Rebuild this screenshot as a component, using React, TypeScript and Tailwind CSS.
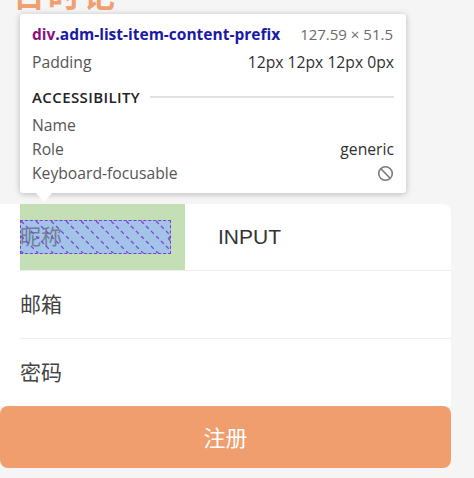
import React from "react";

const sans = { fontFamily: '"Open Sans", "Noto Sans", "Noto Sans CJK SC", sans-serif' };

function NoIcon() {
  return (
    <svg width="17" height="17" viewBox="0 0 17 17" fill="none">
      <circle cx="8.5" cy="8.5" r="6.8" stroke="#7a7a7a" strokeWidth="1.6" />
      <line x1="3.8" y1="3.8" x2="13.2" y2="13.2" stroke="#7a7a7a" strokeWidth="1.6" />
    </svg>
  );
}

function Hatch() {
  return (
    <svg className="absolute inset-0 w-full h-full" preserveAspectRatio="none">
      <defs>
        <pattern id="hatch" width="15" height="15" patternUnits="userSpaceOnUse">
          <line x1="0" y1="0" x2="15" y2="15" stroke="#7a45cf" strokeWidth="1.3" strokeDasharray="4 3" />
        </pattern>
      </defs>
      <rect width="100%" height="100%" fill="url(#hatch)" />
    </svg>
  );
}

function Tooltip() {
  return (
    <div
      className="absolute left-[20px] top-[14px] w-[386px] h-[179px] bg-white rounded-[3px] shadow-[0_1px_6px_rgba(0,0,0,0.25)] px-[12px] pt-[7px] text-[15.7px] leading-[24px]"
      style={{ fontFamily: '"Open Sans", "Noto Sans", sans-serif' }}
    >
      <div className="flex justify-between items-center h-[26px]">
        <span className="font-bold text-[15.5px]">
          <span className="text-[#881280]">div</span>
          <span className="text-[#1a1aa6]">.adm-list-item-content-prefix</span>
        </span>
        <span className="text-[#6b6b6b] text-[15px] pr-[1px]">127.59 × 51.5</span>
      </div>
      <div className="flex justify-between items-center h-[28px] mt-[1px]">
        <span className="text-[#555]">Padding</span>
        <span className="text-[#303030]">12px 12px 12px 0px</span>
      </div>
      <div className="flex items-center gap-[10px] h-[24px] mt-[9px]">
        <span className="text-[15px] font-semibold tracking-[0.4px] text-[#222]">ACCESSIBILITY</span>
        <div className="flex-1 h-[2px] bg-[#e2e2e2]" />
      </div>
      <div className="flex justify-between items-center h-[24px] mt-[4px]">
        <span className="text-[#555]">Name</span>
      </div>
      <div className="flex justify-between items-center h-[24px]">
        <span className="text-[#555]">Role</span>
        <span className="text-[#303030]">generic</span>
      </div>
      <div className="flex justify-between items-center h-[24px]">
        <span className="text-[#555]">Keyboard-focusable</span>
        <NoIcon />
      </div>
      <div className="absolute left-[16px] -bottom-[9px] w-0 h-0 border-l-[8px] border-r-[8px] border-t-[9px] border-l-transparent border-r-transparent border-t-white" />
    </div>
  );
}

export default function App() {
  return (
    <div className="relative w-[474px] h-[478px] overflow-hidden bg-[#f5f5f5]">
      <div className="h-[204px] flex flex-col">
        <div
          className="ml-[13px] -mt-[27px] text-[32px] leading-[40px] font-bold text-[#f0a070] tracking-[3px]"
          style={{ fontFamily: '"Noto Sans CJK SC", sans-serif' }}
        >
          日时记
        </div>
      </div>
      <div className="w-[451px] bg-white rounded-tr-[8px]">
        <div className="ml-[20px] h-[67px] flex border-b border-[#eeeeee]">
          <div className="w-[165px] h-[66px] bg-[#c4dfb5] pt-[16px] pr-[14px] pb-[16px]">
            <div className="relative h-[34px] border border-dashed border-[#7b3fd0] bg-[#a3c3e9] flex items-center overflow-hidden">
              <span className="relative text-[21px] text-[#6f7f95] -ml-[1px]" style={sans}>昵称</span>
              <Hatch />
              <span className="absolute right-[-2px] top-[7px] text-[16px] leading-[18px] text-[#6a3fc0]" style={sans}>‹</span>
            </div>
          </div>
          <div className="flex items-center pl-[33px]">
            <span className="text-[21px] text-[#333]" style={{ fontFamily: '"Liberation Sans", Arial, sans-serif' }}>
              INPUT
            </span>
          </div>
        </div>
        <div className="ml-[20px] h-[68px] flex items-center border-b border-[#eeeeee]">
          <span className="text-[21px] text-[#444]" style={sans}>邮箱</span>
        </div>
        <div className="ml-[20px] h-[67px] flex items-center">
          <span className="text-[21px] text-[#444]" style={sans}>密码</span>
        </div>
      </div>
      <button
        className="w-[451px] h-[62px] rounded-[8px] bg-[#f09e6e] text-white text-[22px] flex items-center justify-center"
        style={sans}
      >
        注册
      </button>
      <Tooltip />
    </div>
  );
}
